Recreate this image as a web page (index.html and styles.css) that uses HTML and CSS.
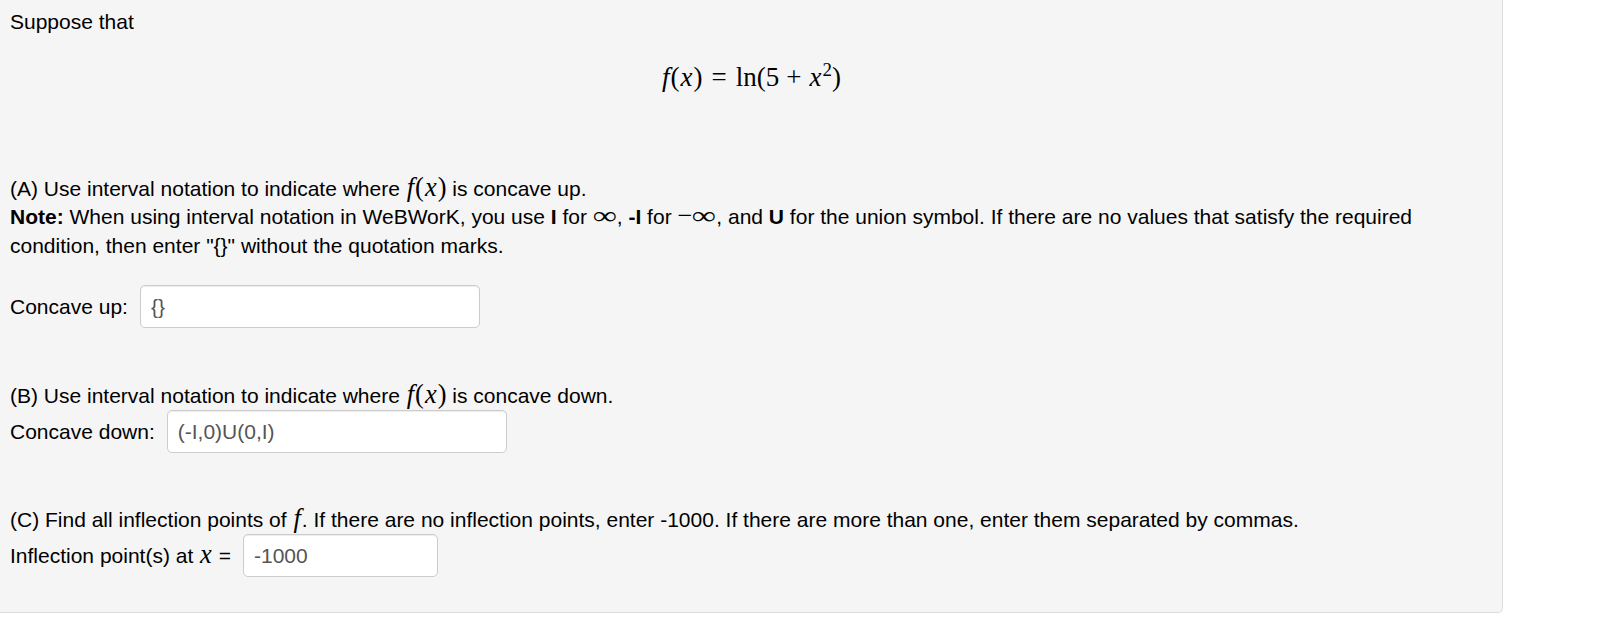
FILE: index.html
```html
<!DOCTYPE html>
<html>
<head>
<meta charset="utf-8">
<link rel="stylesheet" href="styles.css">
</head>
<body>
<div class="panel">
  <p class="line">Suppose that</p>
  <div class="display"><span class="mi">f</span>(<span class="mi">x</span>)<span class="rel">=</span>ln(5<span class="bin">+</span><span class="mi">x</span><sup class="sup">2</sup>)</div>

  <p class="line sec-a">(A) Use interval notation to indicate where <span class="m"><span class="mi">f</span>(<span class="mi">x</span>)</span> is concave up.</p>
  <p class="line"><b>Note:</b> When using interval notation in WeBWorK, you use <b>I</b> for <span class="m"><span class="inf">∞</span></span>, <b>-I</b> for <span class="m"><span class="minus">−</span><span class="inf">∞</span></span>, and <b>U</b> for the union symbol. If there are no values that satisfy the required<br>condition, then enter "{}" without the quotation marks.</p>

  <div class="row row-a"><span class="label">Concave up:</span><input class="answer wide" type="text" value="{}"></div>

  <p class="line sec-b">(B) Use interval notation to indicate where <span class="m"><span class="mi">f</span>(<span class="mi">x</span>)</span> is concave down.</p>
  <div class="row"><span class="label">Concave down:</span><input class="answer wide" type="text" value="(-I,0)U(0,I)"></div>

  <p class="line sec-c">(C) Find all inflection points of <span class="m"><span class="mi">f</span></span>. If there are no inflection points, enter -1000. If there are more than one, enter them separated by commas.</p>
  <div class="row"><span class="label">Inflection point(s) at <span class="m"><span class="mi">x</span></span> =</span><input class="answer narrow" type="text" value="-1000"></div>
</div>
</body>
</html>
```

FILE: styles.css
```css
html, body {
  margin: 0;
  padding: 0;
  background: #ffffff;
}

body {
  font-family: "Liberation Sans", Arial, sans-serif;
  font-size: 21px;
  line-height: 28.5px;
  color: #000;
}

.panel {
  box-sizing: border-box;
  width: 1503px;
  background: #f5f5f5;
  border-right: 1px solid #dcdcdc;
  border-bottom: 1px solid #dcdcdc;
  border-bottom-right-radius: 5px;
  padding: 7.5px 10px 35px 10px;
}

.line {
  margin: 0;
}

.display {
  margin: 26px 0 0 0;
  text-align: center;
  font-family: "Liberation Serif", "DejaVu Serif", serif;
  font-size: 27px;
  line-height: 30px;
  height: 30px;
}

.mi {
  font-style: italic;
  margin: 0 1px;
}

.rel {
  margin: 0 9px;
}

.bin {
  margin: 0 7px;
}

.sup {
  font-size: 0.7em;
  line-height: 0;
  vertical-align: 0.55em;
}

.m {
  font-family: "Liberation Serif", "DejaVu Serif", serif;
  font-size: 1.26em;
  line-height: 0;
}

.inf {
  display: inline-block;
  font-size: 0.95em;
  transform: scaleX(1.35);
  margin: 0 3px;
}

.minus {
  margin-right: 0;
}

.sec-a {
  margin-top: 82.5px;
}

.row {
  display: flex;
  align-items: baseline;
  margin: 0;
}

.row-a {
  margin-top: 25px;
}

.label {
  margin-right: 12px;
}

.answer {
  box-sizing: border-box;
  height: 43px;
  margin: 0;
  padding: 0 10px;
  border: 1px solid #cccccc;
  border-radius: 5px;
  background: #ffffff;
  box-shadow: inset 0 1px 1px rgba(0, 0, 0, 0.075);
  font-family: "Liberation Sans", Arial, sans-serif;
  font-size: 21px;
  color: #555555;
  outline: none;
}

.wide {
  width: 340px;
}

.narrow {
  width: 195px;
}

.sec-b {
  margin-top: 53.5px;
}

.sec-c {
  margin-top: 52.5px;
}
```
